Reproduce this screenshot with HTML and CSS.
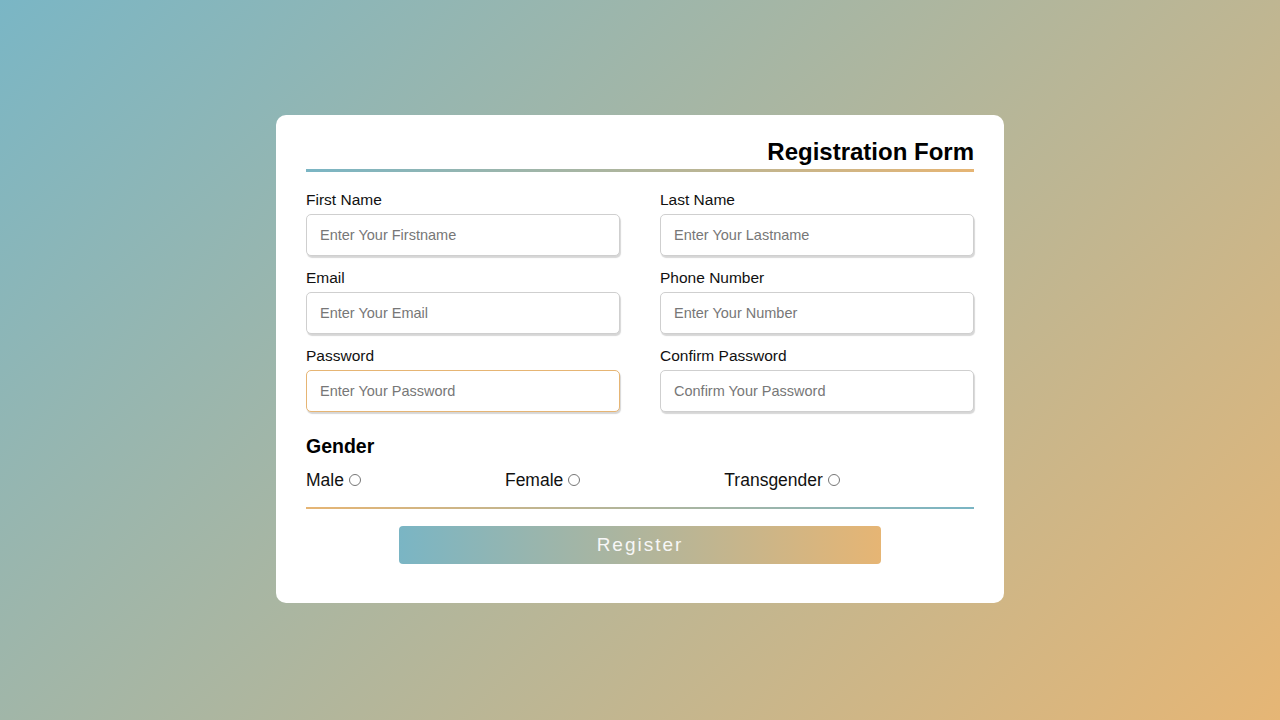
FILE: index.html
```html
<!DOCTYPE html>
<html lang="en">
<head>
<meta charset="utf-8">
<title>Registration Form</title>
<link rel="stylesheet" href="styles.css">
</head>
<body>
<form class="card" onsubmit="return false">
  <h2 class="title">Registration Form</h2>
  <div class="rule rule-top"></div>
  <div class="fields">
    <div class="field">
      <label class="label" for="fn">First Name</label>
      <input class="input" id="fn" type="text" placeholder="Enter Your Firstname">
    </div>
    <div class="field">
      <label class="label" for="ln">Last Name</label>
      <input class="input" id="ln" type="text" placeholder="Enter Your Lastname">
    </div>
    <div class="field">
      <label class="label" for="em">Email</label>
      <input class="input" id="em" type="text" placeholder="Enter Your Email">
    </div>
    <div class="field">
      <label class="label" for="ph">Phone Number</label>
      <input class="input" id="ph" type="text" placeholder="Enter Your Number">
    </div>
    <div class="field">
      <label class="label" for="pw">Password</label>
      <input class="input input-active" id="pw" type="password" placeholder="Enter Your Password" autofocus>
    </div>
    <div class="field">
      <label class="label" for="cpw">Confirm Password</label>
      <input class="input" id="cpw" type="password" placeholder="Confirm Your Password">
    </div>
  </div>
  <h3 class="gender-title">Gender</h3>
  <div class="options">
    <label class="option">Male<input class="radio" type="radio" name="gender"></label>
    <label class="option">Female<input class="radio" type="radio" name="gender"></label>
    <label class="option">Transgender<input class="radio" type="radio" name="gender"></label>
  </div>
  <div class="rule rule-bottom"></div>
  <button class="submit" type="submit">Register</button>
</form>
</body>
</html>
```
FILE: styles.css
```css
* {
  box-sizing: border-box;
}

html, body {
  margin: 0;
  height: 100%;
}

body {
  display: flex;
  align-items: flex-start;
  justify-content: center;
  min-height: 100vh;
  background: linear-gradient(135deg, #7ab6c5 0%, #e6b675 100%);
  font-family: "Liberation Sans", Arial, sans-serif;
  color: #111;
}

.card {
  width: 728px;
  margin-top: 115px;
  background: #fff;
  border-radius: 10px;
  padding: 23px 30px 39px;
}

.title {
  margin: 0;
  font-size: 24px;
  line-height: 28px;
  font-weight: 700;
  text-align: right;
  color: #000;
}

.rule {
  background: linear-gradient(to right, #7ab5c4, #e6b574);
}

.rule-top {
  height: 3px;
  margin-top: 3px;
}

.rule-bottom {
  height: 2px;
  margin-top: 16px;
  background: linear-gradient(to right, #e6b574, #7ab5c4);
}

.fields {
  margin-top: 19px;
  display: grid;
  grid-template-columns: 1fr 1fr;
  column-gap: 40px;
  row-gap: 13px;
}

.field {
  display: flex;
  flex-direction: column;
}

.label {
  font-size: 15.5px;
  line-height: 18px;
  margin-bottom: 5px;
  color: #111;
}

.input {
  width: 100%;
  height: 42px;
  border: 1px solid #cfcfcf;
  border-radius: 5px;
  box-shadow: 1px 2px 1px rgba(0, 0, 0, 0.16);
  padding: 0 13px;
  font-family: "Liberation Sans", Arial, sans-serif;
  font-size: 14.5px;
  color: #333;
  background: #fff;
  outline: none;
}

.input::placeholder {
  color: #777;
}

.input:focus,
.input-active {
  border-color: #e6b574;
}

.gender-title {
  margin: 23px 0 0;
  font-size: 19.5px;
  line-height: 23px;
  font-weight: 700;
  color: #000;
}

.options {
  margin-top: 12px;
  display: flex;
  align-items: center;
  gap: 144px;
  height: 21px;
}

.option {
  display: flex;
  align-items: center;
  font-size: 17.5px;
  line-height: 21px;
  color: #111;
}

.radio {
  width: 12px;
  height: 12px;
  margin: 0 0 1px 5px;
}

.submit {
  display: block;
  width: 482px;
  height: 38px;
  margin: 17px auto 0;
  border: none;
  border-radius: 4px;
  background: linear-gradient(to right, #7ab5c4, #e6b574);
  color: #f7f7f7;
  font-family: "Liberation Sans", Arial, sans-serif;
  font-size: 19px;
  letter-spacing: 2px;
  cursor: pointer;
}
```
